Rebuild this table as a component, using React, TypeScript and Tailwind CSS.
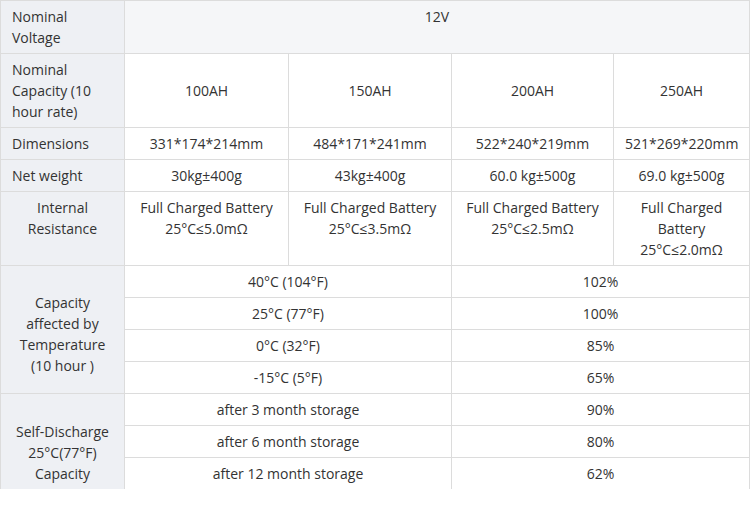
const cell = "border border-[#dcdcdc] px-[11px] py-[5px]"
const head = "bg-[#eef0f4]"

export default function App() {
  return (
    <div className="bg-white w-[750px] h-[508px] text-[14px] leading-[21px] text-[#333] font-['Open_Sans',sans-serif]">
      <table className="border-collapse w-[749px] table-fixed">
        <colgroup>
          <col className="w-[124px]" />
          <col className="w-[164px]" />
          <col className="w-[163px]" />
          <col className="w-[162px]" />
          <col className="w-[136px]" />
        </colgroup>
        <tbody>
          <tr>
            <td className={`${cell} ${head} text-left align-top`}>Nominal Voltage</td>
            <td colSpan={4} className={`${cell} bg-[#f5f6f8] text-center align-top`}>12V</td>
          </tr>
          <tr>
            <td className={`${cell} ${head} text-left align-top`}>Nominal Capacity (10 hour rate)</td>
            <td className={`${cell} text-center align-middle`}>100AH</td>
            <td className={`${cell} text-center align-middle`}>150AH</td>
            <td className={`${cell} text-center align-middle`}>200AH</td>
            <td className={`${cell} text-center align-middle`}>250AH</td>
          </tr>
          <tr>
            <td className={`${cell} ${head} text-left`}>Dimensions</td>
            <td className={`${cell} text-center`}>331*174*214mm</td>
            <td className={`${cell} text-center`}>484*171*241mm</td>
            <td className={`${cell} text-center`}>522*240*219mm</td>
            <td className={`${cell} text-center`}>521*269*220mm</td>
          </tr>
          <tr>
            <td className={`${cell} ${head} text-left`}>Net weight</td>
            <td className={`${cell} text-center`}>30kg±400g</td>
            <td className={`${cell} text-center`}>43kg±400g</td>
            <td className={`${cell} text-center`}>60.0 kg±500g</td>
            <td className={`${cell} text-center`}>69.0 kg±500g</td>
          </tr>
          <tr>
            <td className={`${cell} ${head} text-center align-top`}>Internal Resistance</td>
            <td className={`${cell} text-center align-top`}>Full Charged Battery 25°C≤5.0mΩ</td>
            <td className={`${cell} text-center align-top`}>Full Charged Battery 25°C≤3.5mΩ</td>
            <td className={`${cell} text-center align-top`}>Full Charged Battery 25°C≤2.5mΩ</td>
            <td className={`${cell} text-center align-top`}>Full Charged Battery 25°C≤2.0mΩ</td>
          </tr>
          <tr>
            <td rowSpan={4} className={`${cell} ${head} text-center align-top !pt-[26px]`}>
              Capacity affected by Temperature (10 hour )
            </td>
            <td colSpan={2} className={`${cell} text-center`}>40°C (104°F)</td>
            <td colSpan={2} className={`${cell} text-center`}>102%</td>
          </tr>
          <tr>
            <td colSpan={2} className={`${cell} text-center`}>25°C (77°F)</td>
            <td colSpan={2} className={`${cell} text-center`}>100%</td>
          </tr>
          <tr>
            <td colSpan={2} className={`${cell} text-center`}>0°C (32°F)</td>
            <td colSpan={2} className={`${cell} text-center`}>85%</td>
          </tr>
          <tr>
            <td colSpan={2} className={`${cell} text-center`}>-15°C (5°F)</td>
            <td colSpan={2} className={`${cell} text-center`}>65%</td>
          </tr>
          <tr>
            <td rowSpan={3} className={`${cell} ${head} text-center align-top !pt-[27px] border-b-0`}>
              Self-Discharge 25°C(77°F) Capacity
            </td>
            <td colSpan={2} className={`${cell} text-center`}>after 3 month storage</td>
            <td colSpan={2} className={`${cell} text-center`}>90%</td>
          </tr>
          <tr>
            <td colSpan={2} className={`${cell} text-center`}>after 6 month storage</td>
            <td colSpan={2} className={`${cell} text-center`}>80%</td>
          </tr>
          <tr>
            <td colSpan={2} className={`${cell} text-center border-b-0`}>after 12 month storage</td>
            <td colSpan={2} className={`${cell} text-center border-b-0`}>62%</td>
          </tr>
        </tbody>
      </table>
    </div>
  )
}
